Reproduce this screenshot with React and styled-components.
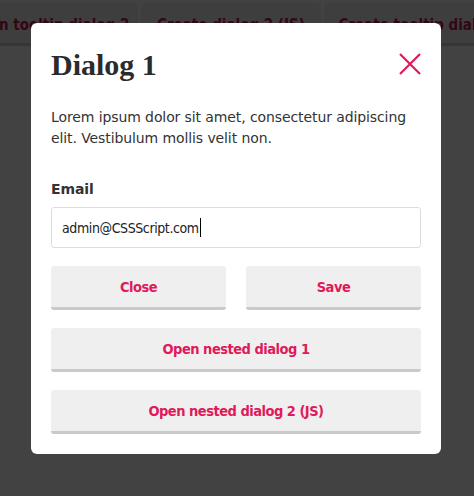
import React from "react";
import styled, { createGlobalStyle } from "styled-components";

const Global = createGlobalStyle`
  html, body { margin: 0; padding: 0; background: #fff; }
  body { font-family: "DejaVu Sans", Verdana, sans-serif; color: #333; overflow: hidden; }
  * { box-sizing: border-box; }
`;

const Page = styled.div`
  width: 474px;
  height: 496px;
  position: relative;
  overflow: hidden;
`;

const BgRow = styled.div`
  display: flex;
  gap: 3px;
  padding-top: 3px;
  margin-left: -40px;
  white-space: nowrap;
`;

const BgButton = styled.button`
  flex: none;
  width: ${(p) => p.$w}px;
  height: 43px;
  border: 0;
  border-bottom: 3px solid #ccc;
  border-radius: 3px;
  background: #efefef;
  color: #c8164f;
  font-family: "DejaVu Sans Condensed", Tahoma, sans-serif;
  font-weight: bold;
  font-size: 15px;
  padding-top: 4px;
  text-align: center;
`;

const Overlay = styled.div`
  position: absolute;
  inset: 0;
  background: rgba(0, 0, 0, 0.74);
  display: flex;
  justify-content: center;
  align-items: flex-start;
  padding: 23px 2px 0 0;
`;

const Dialog = styled.div`
  width: 410px;
  background: #fff;
  border-radius: 6px;
  padding: 20px;
  display: flex;
  flex-direction: column;
`;

const Header = styled.div`
  display: flex;
  align-items: center;
  justify-content: space-between;
  height: 43px;
`;

const Title = styled.h1`
  margin: 0;
  font-family: "Liberation Serif", "DejaVu Serif", Georgia, serif;
  font-weight: bold;
  font-size: 30px;
  color: #2b2b2b;
`;

const CloseIcon = styled.button`
  border: 0;
  background: none;
  padding: 0;
  width: 24px;
  height: 24px;
  display: flex;
  margin-right: -1px;
  margin-top: -2px;
`;

const Text = styled.p`
  margin: 21px 0 0;
  font-size: 14px;
  letter-spacing: -0.1px;
  line-height: 21px;
  color: #333;
`;

const Label = styled.label`
  display: block;
  margin-top: 30px;
  font-weight: bold;
  font-size: 14px;
  letter-spacing: -0.1px;
  line-height: 20px;
  color: #333;
`;

const Input = styled.div`
  margin-top: 8px;
  height: 41px;
  border: 1px solid #ddd;
  border-radius: 3px;
  padding: 0 10px;
  display: flex;
  align-items: center;
  font-family: "DejaVu Sans Condensed", Tahoma, sans-serif;
  font-size: 14px;
  letter-spacing: -0.4px;
  color: #222;
`;

const Caret = styled.span`
  display: inline-block;
  width: 1px;
  height: 19px;
  background: #000;
  margin-left: 1px;
`;

const Grid = styled.div`
  display: grid;
  grid-template-columns: ${(p) => (p.$two ? "1fr 1fr" : "1fr")};
  gap: 18px 20px;
  margin-top: ${(p) => p.$mt}px;
`;

const Button = styled.button`
  height: 44px;
  border: 0;
  border-bottom: 3px solid #c9c9c9;
  border-radius: 3px;
  background: #efefef;
  color: #e0195a;
  font-family: "DejaVu Sans Condensed", Tahoma, sans-serif;
  font-weight: bold;
  font-size: 14.5px;
  letter-spacing: -0.5px;
  padding: 0;
  cursor: pointer;
`;

export default function App() {
  return (
    <Page>
      <Global />
      <BgRow>
        <BgButton $w={178}>Open tooltip dialog 2</BgButton>
        <BgButton $w={180}>Create dialog 2 (JS)</BgButton>
        <BgButton $w={200}>Create tooltip dialog 2</BgButton>
      </BgRow>
      <Overlay>
        <Dialog>
          <Header>
            <Title>Dialog 1</Title>
            <CloseIcon aria-label="Close">
              <svg width="24" height="24" viewBox="0 0 24 24">
                <path d="M2 2 L22 22 M22 2 L2 22" stroke="#e0195a" strokeWidth="2.2" fill="none" />
              </svg>
            </CloseIcon>
          </Header>
          <Text>
            Lorem ipsum dolor sit amet, consectetur adipiscing elit. Vestibulum mollis velit non.
          </Text>
          <Label>Email</Label>
          <Input>
            admin@CSSScript.com<Caret />
          </Input>
          <Grid $two $mt={18}>
            <Button>Close</Button>
            <Button>Save</Button>
          </Grid>
          <Grid $mt={18}>
            <Button>Open nested dialog 1</Button>
            <Button>Open nested dialog 2 (JS)</Button>
          </Grid>
        </Dialog>
      </Overlay>
    </Page>
  );
}
